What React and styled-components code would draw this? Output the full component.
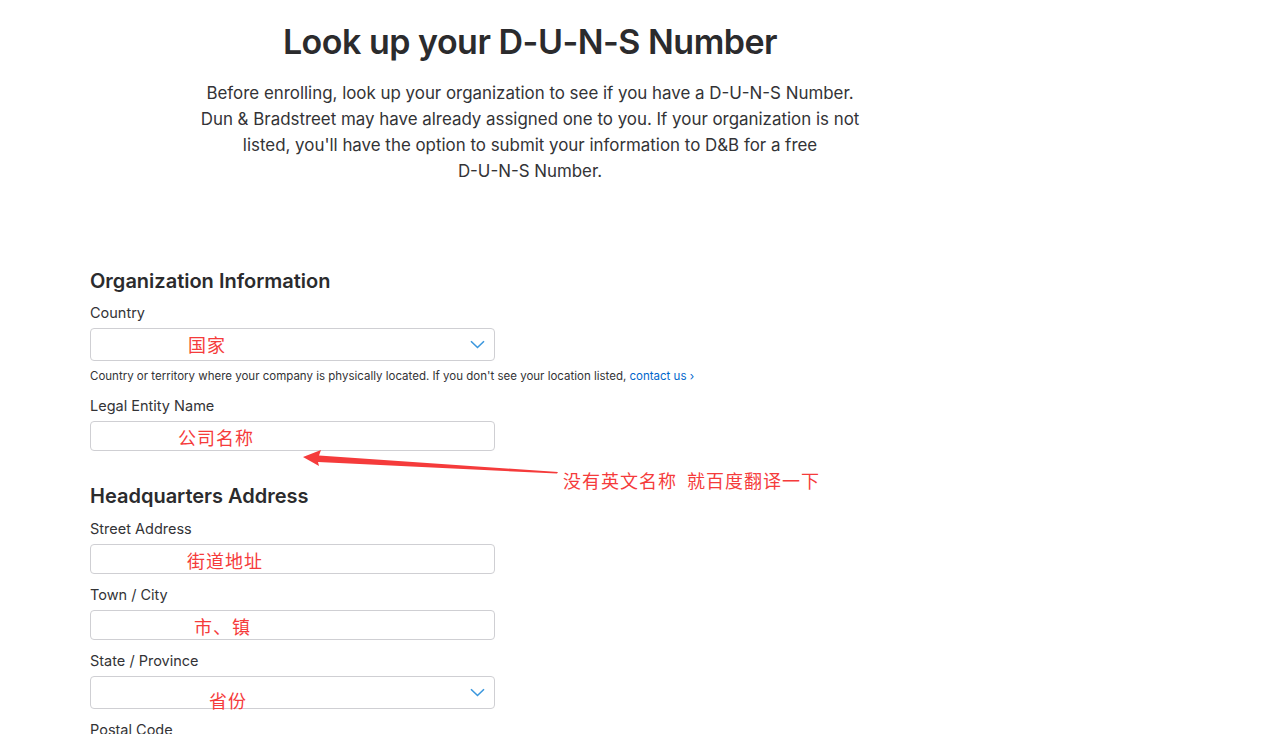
import React from "react";
import styled, { createGlobalStyle } from "styled-components";

const GlobalStyle = createGlobalStyle`
  html, body {
    margin: 0;
    background: #fff;
  }
  body {
    font-family: Inter, "Noto Sans", "Noto Sans CJK SC", sans-serif;
    color: #333336;
  }
`;

const App = () => {
  return (
    <Page>
      <GlobalStyle />
      <Intro>
        <Title>Look up your D-U-N-S Number</Title>
        <Lead>
          Before enrolling, look up your organization to see if you have a D-U-N-S Number.
          <br />
          Dun &amp; Bradstreet may have already assigned one to you. If your organization is not
          <br />
          listed, you'll have the option to submit your information to D&amp;B for a free
          <br />
          D-U-N-S Number.
        </Lead>
      </Intro>

      <Form>
        <SectionTitle>Organization Information</SectionTitle>
        <Field label="Country" note="国家" noteX={97} select tall $top={8} />
        <Help>
          Country or territory where your company is physically located. If you don't see your
          location listed, <Link href="#">contact us ›</Link>
        </Help>
        <Field label="Legal Entity Name" note="公司名称" noteX={87} $top={12} />

        <SectionTitle $top={31}>Headquarters Address</SectionTitle>
        <Field label="Street Address" note="街道地址" noteX={96} />
        <Field label="Town / City" note="市、镇" noteX={103} $top={11} />
        <Field label="State / Province" note="省份" noteX={118} noteY={11} select tall $top={11} />
        <Label $top={11}>Postal Code</Label>
      </Form>

      <Arrow width="260" height="30" viewBox="0 0 260 30">
        <polygon points="0,7 18,0 16,5.5 255,22 254,23.5 15,12 16,16" fill="#f53b3b" />
      </Arrow>
      <Remark>没有英文名称&nbsp;&nbsp;就百度翻译一下</Remark>
    </Page>
  );
};

const Field = ({ label, note, noteX, noteY = 0, select, tall, $top }) => (
  <>
    <Label $top={$top}>{label}</Label>
    <Box $tall={tall}>
      {note && (
        <Note style={{ left: noteX, top: noteY ? noteY : undefined }}>{note}</Note>
      )}
      {select && (
        <Chevron width="15" height="9" viewBox="0 0 15 9">
          <path d="M1 1.2 L7.5 7.5 L14 1.2" fill="none" stroke="#3b97dd" strokeWidth="1.6" />
        </Chevron>
      )}
    </Box>
  </>
);

const Page = styled.div`
  position: relative;
  width: 880px;
  padding: 0 90px;
  min-height: 734px;
  overflow: hidden;
`;

const Intro = styled.div`
  text-align: center;
  padding-top: 22px;
`;

const Title = styled.h1`
  margin: 0;
  font-size: 34px;
  line-height: 40px;
  font-weight: 600;
  letter-spacing: -0.5px;
  color: #2b2b2d;
`;

const Lead = styled.p`
  margin: 18px 0 0;
  font-size: 16.9px;
  line-height: 26px;
  font-weight: 400;
  color: #333336;
`;

const Form = styled.div`
  width: 405px;
  margin-top: 83px;
  display: flex;
  flex-direction: column;
`;

const SectionTitle = styled.h2`
  margin: ${(p) => p.$top || 0}px 0 0;
  font-size: 20px;
  line-height: 28px;
  font-weight: 600;
  color: #2b2b2d;
`;

const Label = styled.div`
  margin-top: ${(p) => (p.$top !== undefined ? p.$top : 9)}px;
  font-size: 14.5px;
  line-height: 20px;
  color: #333336;
`;

const Box = styled.div`
  position: relative;
  margin-top: 5px;
  height: ${(p) => (p.$tall ? 31 : 28)}px;
  border: 1px solid #cfcfd3;
  border-radius: 4px;
  background: #fff;
`;

const Note = styled.span`
  position: absolute;
  top: 3px;
  font-family: "Noto Sans CJK SC", sans-serif;
  font-size: 18px;
  line-height: 24px;
  letter-spacing: 1px;
  color: #f53b3b;
`;

const Chevron = styled.svg`
  position: absolute;
  right: 9px;
  top: 11px;
`;

const Help = styled.div`
  margin-top: 7px;
  font-size: 11.5px;
  line-height: 16px;
  color: #333336;
  white-space: nowrap;
`;

const Link = styled.a`
  color: #0066cc;
  text-decoration: none;
`;

const Arrow = styled.svg`
  position: absolute;
  left: 303px;
  top: 450px;
`;

const Remark = styled.div`
  position: absolute;
  left: 563px;
  top: 467px;
  font-family: "Noto Sans CJK SC", sans-serif;
  font-size: 18px;
  line-height: 26px;
  letter-spacing: 1px;
  color: #f53b3b;
  white-space: nowrap;
`;

export default App;
